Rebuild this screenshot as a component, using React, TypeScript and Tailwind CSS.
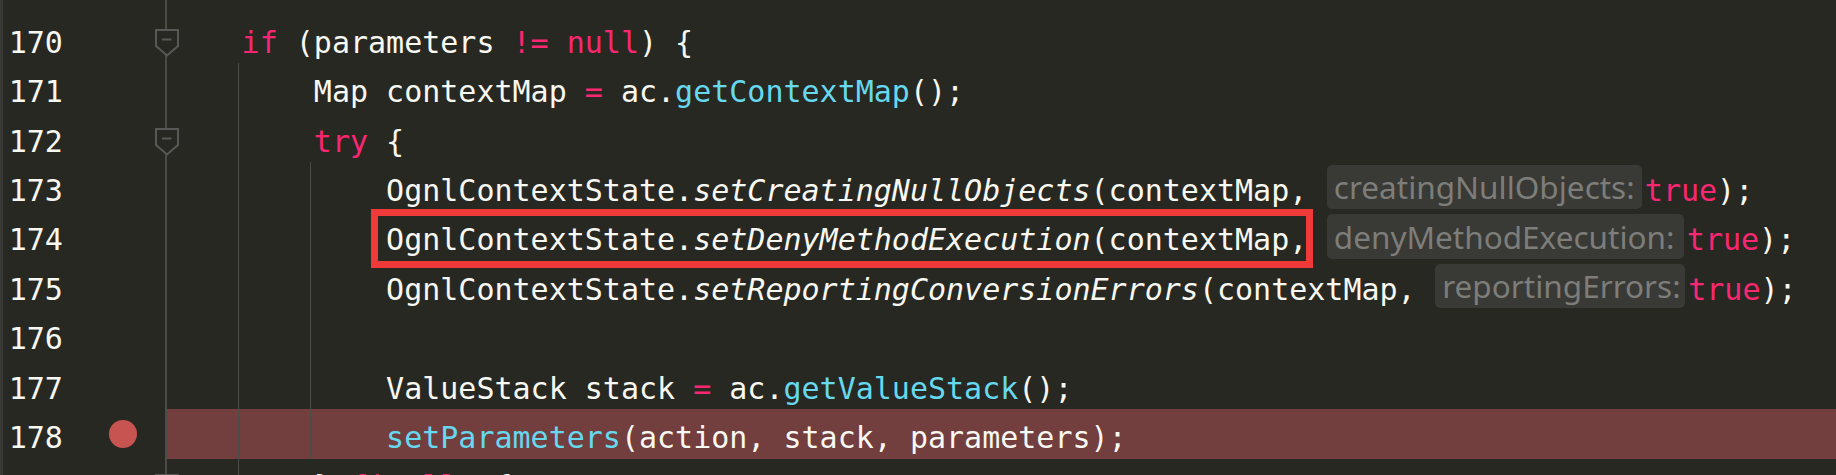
import React from "react";

type Part =
  | { t: string; c?: "k" | "f" | "i" }
  | { hint: string; w: string };

const colorOf = (c?: string) =>
  c === "k" ? "text-[#f92672]" : c === "f" ? "text-[#66d9ef]" : c === "i" ? "italic text-[#f8f8f2]" : "text-[#f8f8f2]";

function FoldMarker() {
  return (
    <svg
      className="absolute left-[-10px] top-[15px]"
      width="24"
      height="28"
      viewBox="0 0 24 28"
    >
      <polygon
        points="1,1 23,1 23,17 12,26.5 1,17"
        fill="#282823"
        stroke="#585856"
        strokeWidth="2"
        strokeLinejoin="miter"
      />
      <line x1="7" y1="10.5" x2="16.5" y2="10.5" stroke="#585856" strokeWidth="2" />
    </svg>
  );
}

function Row({
  num,
  fold,
  bp,
  hl,
  guides,
  parts,
}: {
  num: number;
  fold?: boolean;
  bp?: boolean;
  hl?: boolean;
  guides: number;
  parts: Part[];
}) {
  return (
    <div className="flex h-[49.4px] shrink-0">
      <div className="w-[3px] shrink-0 bg-[#383836]" />
      <div className="flex w-[162px] shrink-0 items-center">
        <span className="ml-[5.7px] w-[54.2px] pt-[8px] leading-[44px] text-[#f8f8f2]">{num}</span>
        {bp && <div className="ml-[46.4px] h-[28px] w-[28px] rounded-full bg-[#c75450]" />}
      </div>
      <div className="relative w-[2px] shrink-0 bg-[#4b4b48]">{fold && <FoldMarker />}</div>
      <div className={`flex flex-1 ${hl ? "bg-[#733e3e]" : ""}`}>
        <div className="w-[70.7px] shrink-0" />
        {guides >= 1 && <div className="w-[72.28px] shrink-0 border-l border-[#4b4b48]" />}
        {guides >= 2 && <div className="w-[72.28px] shrink-0 border-l border-[#4b4b48]" />}
        <div className="w-[3.9px] shrink-0" />
        <div className="flex items-center whitespace-pre">
          {(() => {
            const out: React.ReactNode[] = [];
            let buf: React.ReactNode[] = [];
            const flush = (k: number) => {
              if (buf.length) {
                out.push(
                  <span key={"t" + k} className="block pt-[8px] leading-[44px]">
                    {buf}
                  </span>
                );
                buf = [];
              }
            };
            parts.forEach((p, i) => {
              if ("hint" in p) {
                flush(i);
                out.push(
                  <span
                    key={"h" + i}
                    className={`ml-[1.5px] mr-[3px] flex h-[44.4px] ${p.w} items-center rounded-[5px] bg-[#393935] pl-[7px] font-['Noto_Sans',sans-serif] text-[31.5px] leading-none text-[#7d7d7a]`}
                  >
                    {p.hint}
                  </span>
                );
              } else {
                buf.push(
                  <span key={i} className={colorOf(p.c)}>
                    {p.t}
                  </span>
                );
              }
            });
            flush(999);
            return out;
          })()}
        </div>
      </div>
    </div>
  );
}

export default function App() {
  return (
    <div className="relative h-[475px] w-[1836px] overflow-hidden bg-[#282823] font-['DejaVu_Sans_Mono',monospace] text-[30px]">
      <div className="flex flex-col">
        <div className="flex h-[14.1px] shrink-0">
          <div className="w-[3px] shrink-0 bg-[#383836]" />
          <div className="w-[162px] shrink-0" />
          <div className="w-[2px] shrink-0 bg-[#4b4b48]" />
          <div className="flex-1" />
        </div>
        <Row
          num={170}
          fold
          guides={0}
          parts={[
            { t: "if", c: "k" },
            { t: " (parameters " },
            { t: "!=", c: "k" },
            { t: " " },
            { t: "null", c: "k" },
            { t: ") {" },
          ]}
        />
        <Row
          num={171}
          guides={1}
          parts={[
            { t: "Map contextMap " },
            { t: "=", c: "k" },
            { t: " ac." },
            { t: "getContextMap", c: "f" },
            { t: "();" },
          ]}
        />
        <Row num={172} fold guides={1} parts={[{ t: "try", c: "k" }, { t: " {" }]} />
        <Row
          num={173}
          guides={2}
          parts={[
            { t: "OgnlContextState." },
            { t: "setCreatingNullObjects", c: "i" },
            { t: "(contextMap, " },
            { hint: "creatingNullObjects:", w: "w-[315px]" },
            { t: "true", c: "k" },
            { t: ");" },
          ]}
        />
        <Row
          num={174}
          guides={2}
          parts={[
            { t: "OgnlContextState." },
            { t: "setDenyMethodExecution", c: "i" },
            { t: "(contextMap, " },
            { hint: "denyMethodExecution:", w: "w-[357px]" },
            { t: "true", c: "k" },
            { t: ");" },
          ]}
        />
        <Row
          num={175}
          guides={2}
          parts={[
            { t: "OgnlContextState." },
            { t: "setReportingConversionErrors", c: "i" },
            { t: "(contextMap, " },
            { hint: "reportingErrors:", w: "w-[250px]" },
            { t: "true", c: "k" },
            { t: ");" },
          ]}
        />
        <Row num={176} guides={2} parts={[]} />
        <Row
          num={177}
          guides={2}
          parts={[
            { t: "ValueStack stack " },
            { t: "=", c: "k" },
            { t: " ac." },
            { t: "getValueStack", c: "f" },
            { t: "();" },
          ]}
        />
        <Row
          num={178}
          bp
          hl
          guides={2}
          parts={[{ t: "setParameters", c: "f" }, { t: "(action, stack, parameters);" }]}
        />
        <Row
          num={179}
          fold
          guides={1}
          parts={[{ t: "} " }, { t: "finally", c: "k" }, { t: " {" }]}
        />
      </div>
      <div className="pointer-events-none absolute left-[371px] top-[209px] h-[59px] w-[942px] border-[7px] border-[#f03a3a]" />
    </div>
  );
}
